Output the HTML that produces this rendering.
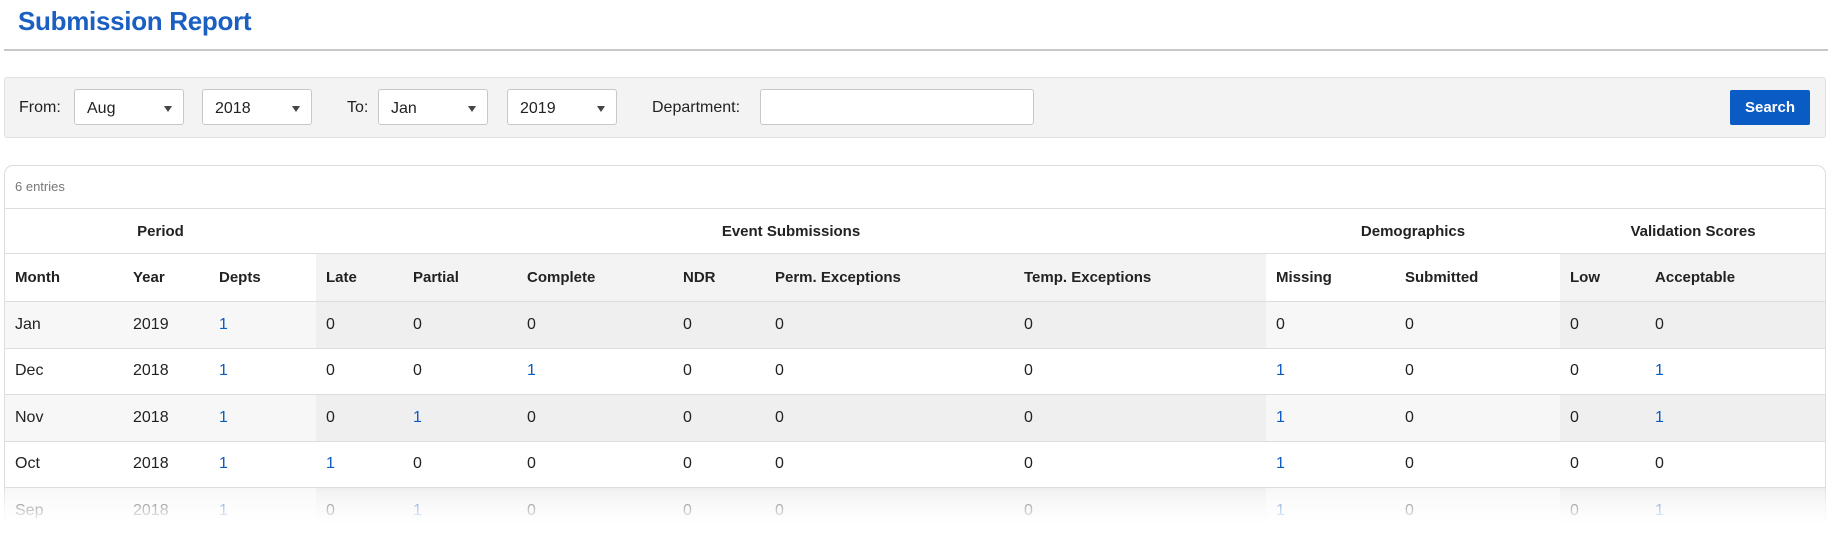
<!DOCTYPE html>
<html style="height:535px;overflow:hidden"><head><meta charset="utf-8"><style>
*{box-sizing:border-box;margin:0;padding:0}
body{width:1832px;height:535px;overflow:hidden;background:#fff;font-family:"Liberation Sans",sans-serif;color:#222;font-size:16px;position:relative}
h1{position:absolute;left:18px;top:6px;font-size:26px;font-weight:bold;color:#1a5fc1;letter-spacing:-0.3px}
.rule{position:absolute;left:4px;right:4px;top:49px;height:2px;background:#c8c8c8}
.filter{position:absolute;left:4px;width:1822px;top:77px;height:61px;background:#f3f3f3;border:1px solid #e0e0e0;border-radius:3px}
.lbl{position:absolute;top:99px;font-size:16px;color:#222}
.sel,.inp{position:absolute;top:89px;height:36px;background:#fff;border:1px solid #c8c8c8;border-radius:3px;font-size:16px;padding:10px 0 0 12px;color:#222}
.sel:after{content:"";position:absolute;right:11px;top:16px;border-left:4px solid transparent;border-right:4px solid transparent;border-top:6px solid #444}
.btn{position:absolute;left:1730px;top:90px;width:80px;height:35px;background:#0b5bc4;color:#fff;font-weight:bold;font-size:15px;text-align:center;line-height:35px;border-radius:2px}
.card{position:absolute;left:4px;width:1822px;top:165px;height:370px;border:1px solid #ddd;border-bottom:none;border-radius:9px 9px 0 0;overflow:hidden}
.ent{position:absolute;left:10px;top:13px;font-size:13px;color:#777}
table{position:absolute;left:0;top:42px;border-collapse:collapse;table-layout:fixed;width:1821px}
td,th{padding:0 0 0 10px;text-align:left;border-top:1px solid #ddd;font-weight:normal;white-space:nowrap}
tr.g th{height:45px;text-align:center;padding:0;font-weight:bold;font-size:15px}
tr.h th{height:48px;font-weight:bold;font-size:15px}
tr.d td{height:46.5px}
.gr{background:#f3f3f3}
tr.o td{background:#f7f7f7}
tr.o td.e{background:#efefef}
.b{color:#0b5bc4}
.fade{position:absolute;left:0;right:0;top:490px;height:45px;background:linear-gradient(rgba(255,255,255,0.2),rgba(255,255,255,0.7) 40%,#fff 75%)}
</style></head><body>
<h1>Submission Report</h1>
<div class="rule"></div>
<div class="filter"></div>
<div class="lbl" style="left:19px">From:</div>
<div class="sel" style="left:74px;width:110px">Aug</div>
<div class="sel" style="left:202px;width:110px">2018</div>
<div class="lbl" style="left:347px">To:</div>
<div class="sel" style="left:378px;width:110px">Jan</div>
<div class="sel" style="left:507px;width:110px">2019</div>
<div class="lbl" style="left:652px">Department:</div>
<div class="inp" style="left:760px;width:274px"></div>
<div class="btn">Search</div>
<div class="card">
<div class="ent">6 entries</div>
<table>
<colgroup><col style="width:118px"><col style="width:86px"><col style="width:107px"><col style="width:87px"><col style="width:114px"><col style="width:156px"><col style="width:92px"><col style="width:249px"><col style="width:252px"><col style="width:129px"><col style="width:165px"><col style="width:85px"><col style="width:181px"></colgroup>
<tr class="g"><th colspan="3">Period</th><th colspan="6">Event Submissions</th><th colspan="2">Demographics</th><th colspan="2">Validation Scores</th></tr>
<tr class="h"><th>Month</th><th>Year</th><th>Depts</th><th class="gr">Late</th><th class="gr">Partial</th><th class="gr">Complete</th><th class="gr">NDR</th><th class="gr">Perm. Exceptions</th><th class="gr">Temp. Exceptions</th><th>Missing</th><th>Submitted</th><th class="gr">Low</th><th class="gr">Acceptable</th></tr>
<tr class="d o"><td>Jan</td><td>2019</td><td class="b">1</td><td class="e">0</td><td class="e">0</td><td class="e">0</td><td class="e">0</td><td class="e">0</td><td class="e">0</td><td>0</td><td>0</td><td class="e">0</td><td class="e">0</td></tr>
<tr class="d"><td>Dec</td><td>2018</td><td class="b">1</td><td>0</td><td>0</td><td class="b">1</td><td>0</td><td>0</td><td>0</td><td class="b">1</td><td>0</td><td>0</td><td class="b">1</td></tr>
<tr class="d o"><td>Nov</td><td>2018</td><td class="b">1</td><td class="e">0</td><td class="e b">1</td><td class="e">0</td><td class="e">0</td><td class="e">0</td><td class="e">0</td><td class="b">1</td><td>0</td><td class="e">0</td><td class="e b">1</td></tr>
<tr class="d"><td>Oct</td><td>2018</td><td class="b">1</td><td class="b">1</td><td>0</td><td>0</td><td>0</td><td>0</td><td>0</td><td class="b">1</td><td>0</td><td>0</td><td>0</td></tr>
<tr class="d o"><td>Sep</td><td>2018</td><td class="b">1</td><td class="e">0</td><td class="e b">1</td><td class="e">0</td><td class="e">0</td><td class="e">0</td><td class="e">0</td><td class="b">1</td><td>0</td><td class="e">0</td><td class="e b">1</td></tr>
</table>
</div>
<div class="fade"></div>
</body></html>
